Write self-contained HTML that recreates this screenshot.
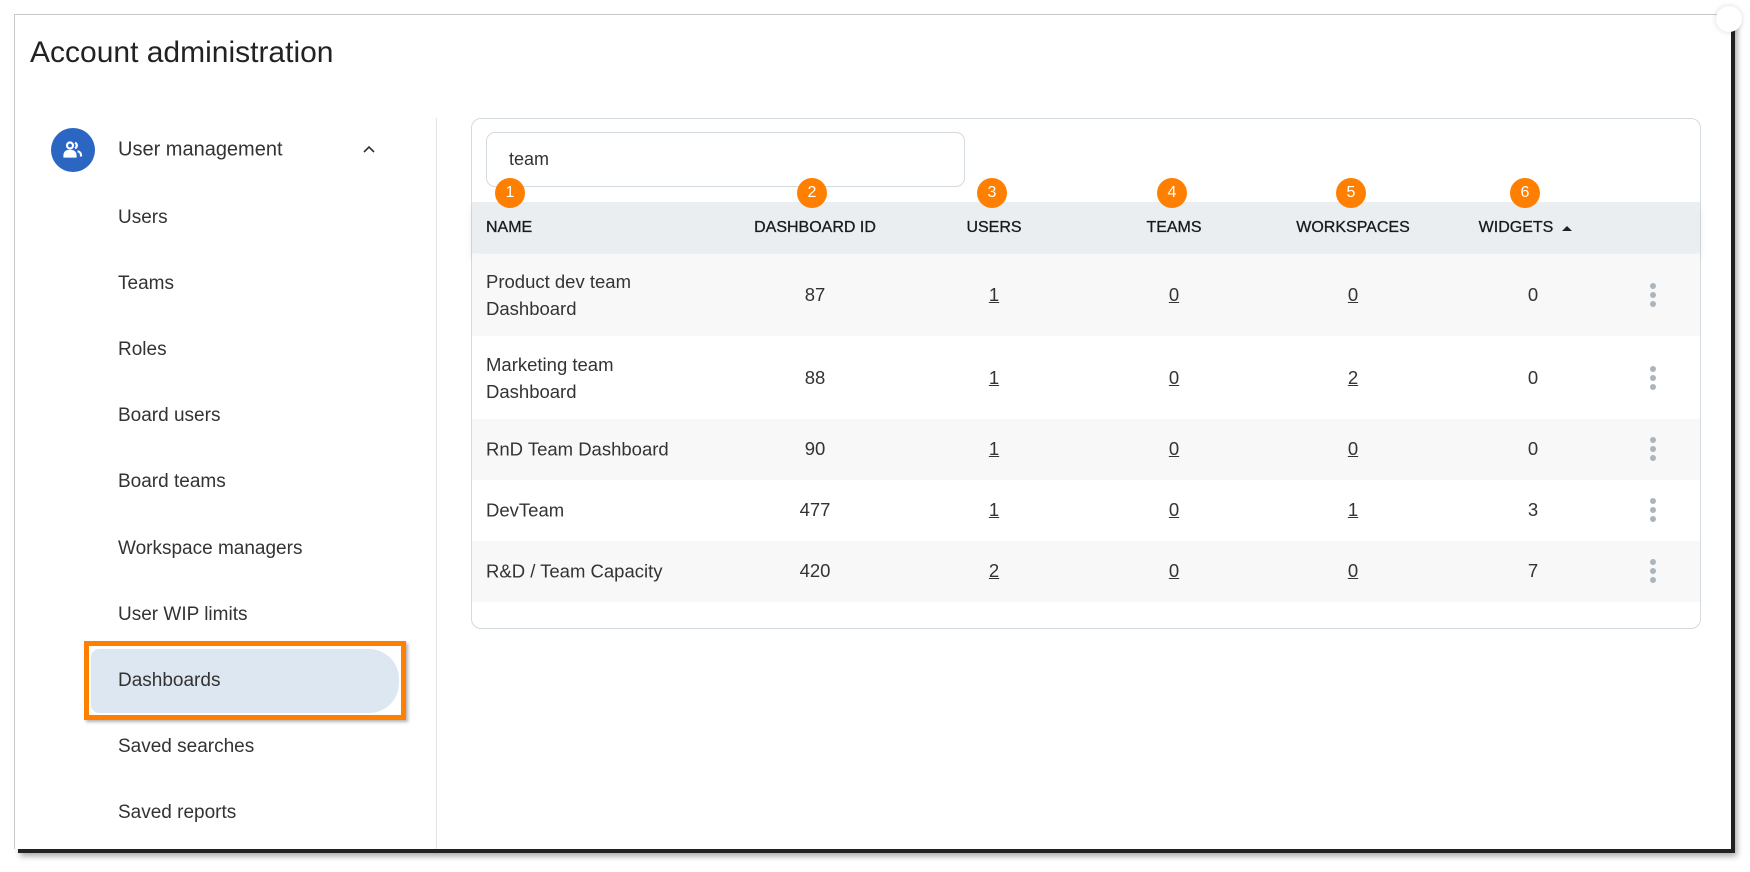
<!DOCTYPE html>
<html><head><meta charset="utf-8">
<style>
*{margin:0;padding:0;box-sizing:border-box}
body{width:1750px;height:872px;background:#fff;font-family:"Liberation Sans",sans-serif;color:#333;position:relative;overflow:hidden}
.panel{position:absolute;left:14px;top:14px;width:1717px;height:835px;background:#fff;border-top:1px solid #c8c8c8;border-left:1px solid #c8c8c8;box-shadow:4px 4px 0 #222,6px 7px 6px rgba(0,0,0,.35)}
.abs{position:absolute}
.title{left:30px;top:36px;font-size:30px;color:#222}
.nav{left:118px;font-size:19px;color:#333;transform:translateY(-50%)}
.div{left:436px;top:118px;width:1px;height:731px;background:#dfe4e8}
.card{left:471px;top:118px;width:1230px;height:511px;border:1px solid #d3dbe0;border-radius:10px;overflow:hidden}
.search{left:486px;top:132px;width:479px;height:55px;border:1px solid #d3dbe0;border-radius:9px;font-size:18px;padding:16px 0 0 22px;color:#333;background:#fff}
.hband{left:472px;top:202px;width:1228px;height:51px;background:#ebeef1;box-shadow:0 6px 8px rgba(0,0,0,.07)}
.hd{top:228px;font-size:16px;color:#1a1a1a;transform:translate(-50%,-50%);white-space:nowrap;-webkit-text-stroke:0.3px #1a1a1a}
.badge{width:30px;height:30px;border-radius:50%;background:#ff7f00;color:#fff;font-size:16px;text-align:center;line-height:30px;transform:translate(-50%,-50%);top:193px}
.row{left:472px;width:1228px}
.g{background:#f8f8f8}
.c{font-size:18.5px;transform:translate(-50%,-50%);white-space:nowrap}
.u{text-decoration:underline}
.n{left:486px;font-size:18.5px;line-height:27px;transform:translateY(-50%)}
.dots{width:6px;transform:translate(-50%,-50%)}
.dots i{display:block;width:6px;height:6px;border-radius:50%;background:#aab5bd;margin:3px 0}
</style></head><body>
<div class="panel"></div>
<div class="abs" style="left:1716px;top:6px;width:26px;height:26px;border-radius:50%;background:#fff;box-shadow:0 0 6px rgba(0,0,0,.15)"></div>
<div class="abs title">Account administration</div>

<div class="abs" style="left:51px;top:128px;width:44px;height:44px;border-radius:50%;background:#2a66c2"></div>
<svg class="abs" style="left:62px;top:139px" width="22" height="22" viewBox="0 0 22 22" fill="none" stroke="#fff" stroke-width="2.2">
<circle cx="8" cy="6.5" r="3"/><path d="M13 3.8a3 3 0 0 1 0 5.5"/><path d="M2.5 17.5v-1.5a4 4 0 0 1 4-4h3a4 4 0 0 1 4 4v1.5z" fill="#fff"/><path d="M15.5 12.3a4 4 0 0 1 3.5 4v1.2"/>
</svg>
<div class="abs nav" style="top:150px;font-size:20px">User management</div>
<svg class="abs" style="left:362px;top:144px" width="14" height="10" viewBox="0 0 14 10"><path d="M2 8L7 3L12 8" stroke="#333" stroke-width="1.6" fill="none"/></svg>

<div class="abs nav" style="top:218px">Users</div>
<div class="abs nav" style="top:284px">Teams</div>
<div class="abs nav" style="top:350px">Roles</div>
<div class="abs nav" style="top:416px">Board users</div>
<div class="abs nav" style="top:482px">Board teams</div>
<div class="abs nav" style="top:549px">Workspace managers</div>
<div class="abs nav" style="top:615px">User WIP limits</div>
<div class="abs" style="left:84px;top:641px;width:322px;height:79px;border:5px solid #ff7f00;box-shadow:2px 2px 3px rgba(0,0,0,.3)"></div>
<div class="abs" style="left:91px;top:649px;width:308px;height:64px;background:#dde7f2;border-radius:8px 30px 30px 8px"></div>
<div class="abs nav" style="top:681px">Dashboards</div>
<div class="abs nav" style="top:747px">Saved searches</div>
<div class="abs nav" style="top:813px">Saved reports</div>

<div class="abs div"></div>
<div class="abs card"></div>
<div class="abs search">team</div>
<div class="abs hband"></div>
<div class="abs hd" style="left:486px;transform:translateY(-50%)">NAME</div>
<div class="abs hd" style="left:815px">DASHBOARD ID</div>
<div class="abs hd" style="left:994px">USERS</div>
<div class="abs hd" style="left:1174px">TEAMS</div>
<div class="abs hd" style="left:1353px">WORKSPACES</div>
<div class="abs hd" style="left:1516px">WIDGETS</div>
<svg class="abs" style="left:1561px;top:224px" width="12" height="8" viewBox="0 0 12 8"><path d="M1 7L6 2L11 7z" fill="#222"/></svg>
<div class="abs badge" style="left:510px">1</div>
<div class="abs badge" style="left:812px">2</div>
<div class="abs badge" style="left:992px">3</div>
<div class="abs badge" style="left:1172px">4</div>
<div class="abs badge" style="left:1351px">5</div>
<div class="abs badge" style="left:1525px">6</div>

<div class="abs row g" style="top:254px;height:82px"></div>
<div class="abs row g" style="top:419px;height:61px"></div>
<div class="abs row g" style="top:541px;height:61px"></div>

<div class="abs n" style="top:295px">Product dev team<br>Dashboard</div>
<div class="abs c" style="left:815px;top:295px">87</div>
<div class="abs c u" style="left:994px;top:295px">1</div>
<div class="abs c u" style="left:1174px;top:295px">0</div>
<div class="abs c u" style="left:1353px;top:295px">0</div>
<div class="abs c" style="left:1533px;top:295px">0</div>
<div class="abs dots" style="left:1653px;top:295px"><i></i><i></i><i></i></div>

<div class="abs n" style="top:378px">Marketing team<br>Dashboard</div>
<div class="abs c" style="left:815px;top:378px">88</div>
<div class="abs c u" style="left:994px;top:378px">1</div>
<div class="abs c u" style="left:1174px;top:378px">0</div>
<div class="abs c u" style="left:1353px;top:378px">2</div>
<div class="abs c" style="left:1533px;top:378px">0</div>
<div class="abs dots" style="left:1653px;top:378px"><i></i><i></i><i></i></div>

<div class="abs n" style="top:449px">RnD Team Dashboard</div>
<div class="abs c" style="left:815px;top:449px">90</div>
<div class="abs c u" style="left:994px;top:449px">1</div>
<div class="abs c u" style="left:1174px;top:449px">0</div>
<div class="abs c u" style="left:1353px;top:449px">0</div>
<div class="abs c" style="left:1533px;top:449px">0</div>
<div class="abs dots" style="left:1653px;top:449px"><i></i><i></i><i></i></div>

<div class="abs n" style="top:510px">DevTeam</div>
<div class="abs c" style="left:815px;top:510px">477</div>
<div class="abs c u" style="left:994px;top:510px">1</div>
<div class="abs c u" style="left:1174px;top:510px">0</div>
<div class="abs c u" style="left:1353px;top:510px">1</div>
<div class="abs c" style="left:1533px;top:510px">3</div>
<div class="abs dots" style="left:1653px;top:510px"><i></i><i></i><i></i></div>

<div class="abs n" style="top:571px">R&amp;D / Team Capacity</div>
<div class="abs c" style="left:815px;top:571px">420</div>
<div class="abs c u" style="left:994px;top:571px">2</div>
<div class="abs c u" style="left:1174px;top:571px">0</div>
<div class="abs c u" style="left:1353px;top:571px">0</div>
<div class="abs c" style="left:1533px;top:571px">7</div>
<div class="abs dots" style="left:1653px;top:571px"><i></i><i></i><i></i></div>
</body></html>
